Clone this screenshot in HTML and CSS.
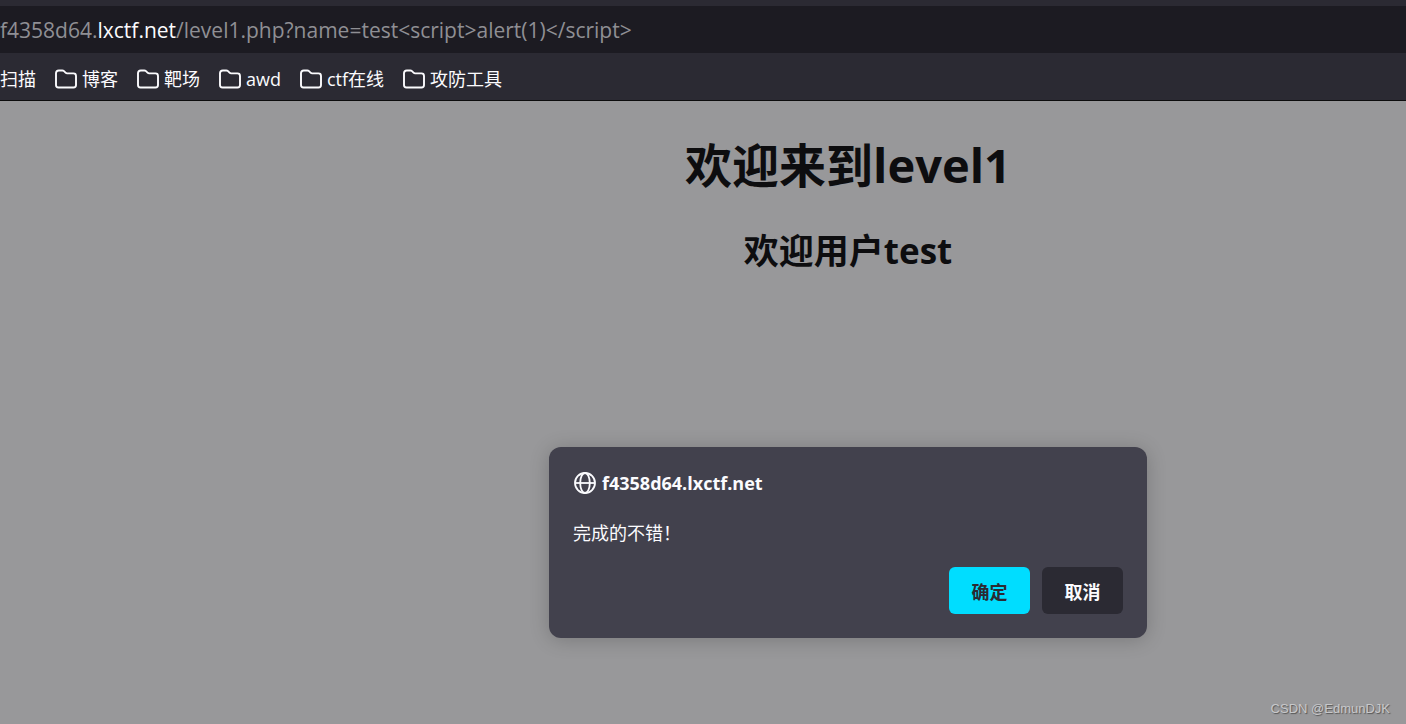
FILE: index.html
```
<!DOCTYPE html>
<html lang="zh-CN">
<head>
  <meta charset="UTF-8" />
  <meta name="viewport" content="width=device-width, initial-scale=1.0"/>
  <title>欢迎来到level1</title>
  <link rel="stylesheet" href="styles.css">
</head>
<body>
  <!-- folder icon shared by the bookmarks -->
  <svg class="sprite" width="0" height="0" aria-hidden="true">
    <symbol id="folder" viewBox="0 0 24 24">
      <path d="M2 18V6.300Q2 3.500 4.800 3.500H8.300Q9.300 3.500 10 4.200L11.500 5.700Q12.200 6.400 13.200 6.400H19.500Q22 6.400 22 8.900V18Q22 20.500 19.500 20.500H4.500Q2 20.500 2 18Z" fill="none" stroke="currentColor" stroke-width="1.900" stroke-linejoin="round"/>
    </symbol>
  </svg>

  <header class="browser">
    <div class="url-bar">f4358d64.<span class="domain">lxctf.net</span>/level1.php?name=test&lt;script&gt;alert(1)&lt;/script&gt;</div>
    <nav class="bookmarks">
      <a href="#">扫描</a>
      <a href="#"><svg class="folder"><use href="#folder"/></svg>博客</a>
      <a href="#"><svg class="folder"><use href="#folder"/></svg>靶场</a>
      <a href="#"><svg class="folder"><use href="#folder"/></svg>awd</a>
      <a href="#"><svg class="folder"><use href="#folder"/></svg>ctf在线</a>
      <a href="#"><svg class="folder"><use href="#folder"/></svg>攻防工具</a>
    </nav>
  </header>

  <main class="page">
    <h1>欢迎来到level1</h1>
    <h2>欢迎用户test</h2>

    <div class="dialog" role="dialog" aria-labelledby="dialogTitle">
      <div class="dialog-title">
        <svg class="globe" viewBox="0 0 24 24" fill="none" stroke="currentColor" stroke-width="1.800" aria-hidden="true">
          <circle cx="12" cy="12" r="10"/>
          <ellipse cx="12" cy="12" rx="4.800" ry="10"/>
          <path d="M2 12H22"/>
        </svg>
        <strong id="dialogTitle">f4358d64.lxctf.net</strong>
      </div>
      <p>完成的不错！</p>
      <div class="dialog-buttons">
        <button type="button" class="ok">确定</button>
        <button type="button" class="cancel">取消</button>
      </div>
    </div>

    <span class="watermark">CSDN @EdmunDJK</span>
  </main>
</body>
</html>
```

FILE: styles.css
```
* {
  box-sizing: border-box;
}

body {
  margin: 0;
  min-height: 100vh;
  display: flex;
  flex-direction: column;
  font-family: "Open Sans", "Noto Sans CJK SC", sans-serif;
  background: #98989a;
  color: #0d0d0f;
}

.sprite {
  position: absolute;
}

.browser {
  padding-top: 6px;
  background: #2b2a33;
  border-bottom: 1px solid #0c0c0d;
}

.url-bar {
  height: 47px;
  line-height: 48px;
  font-size: 21px;
  white-space: nowrap;
  background: #1c1b22;
  color: #8f8f94;
}

.url-bar .domain {
  color: #fbfbfe;
}

.bookmarks {
  display: flex;
  align-items: center;
  gap: 18px;
  height: 47px;
  padding-top: 4px;
}

.bookmarks a {
  display: flex;
  align-items: center;
  gap: 4px;
  font-size: 18px;
  line-height: 24px;
  white-space: nowrap;
  text-decoration: none;
  color: #fbfbfe;
}

.folder {
  width: 24px;
  height: 24px;
}

.page {
  position: relative;
  flex: 1;
  padding-left: 290px;
  text-align: center;
}

h1 {
  margin: 32px 0 0;
  font-size: 47px;
  line-height: 64px;
}

h2 {
  margin: 30px 0 0;
  font-size: 35px;
  line-height: 48px;
}

.dialog {
  width: 598px;
  max-width: 100%;
  margin: 172px auto 0;
  padding: 24px;
  border-radius: 12px;
  background: #42414d;
  color: #fbfbfe;
  text-align: left;
  box-shadow: 0 2px 20px rgba(0, 0, 0, 0.2);
}

.dialog-title {
  display: flex;
  align-items: center;
  gap: 5px;
  font-size: 18px;
  line-height: 22px;
}

.globe {
  width: 24px;
  height: 24px;
}

.dialog p {
  margin: 26px 0 22px;
  font-size: 18px;
  line-height: 24px;
}

.dialog-buttons {
  display: flex;
  justify-content: flex-end;
  gap: 12px;
}

.dialog-buttons button {
  width: 81px;
  height: 47px;
  padding: 0;
  border: none;
  border-radius: 6px;
  font-family: inherit;
  font-size: 18px;
  font-weight: 700;
}

.dialog-buttons .ok {
  background: #00ddff;
  color: #2b2a33;
}

.dialog-buttons .cancel {
  background: #2b2a33;
  color: #fbfbfe;
}

.watermark {
  position: absolute;
  right: 16px;
  bottom: 6px;
  font-family: "Liberation Sans", sans-serif;
  font-size: 13px;
  line-height: 18px;
  color: #c8c8ca;
  text-shadow: 1px 1px 1px #555;
}
```
